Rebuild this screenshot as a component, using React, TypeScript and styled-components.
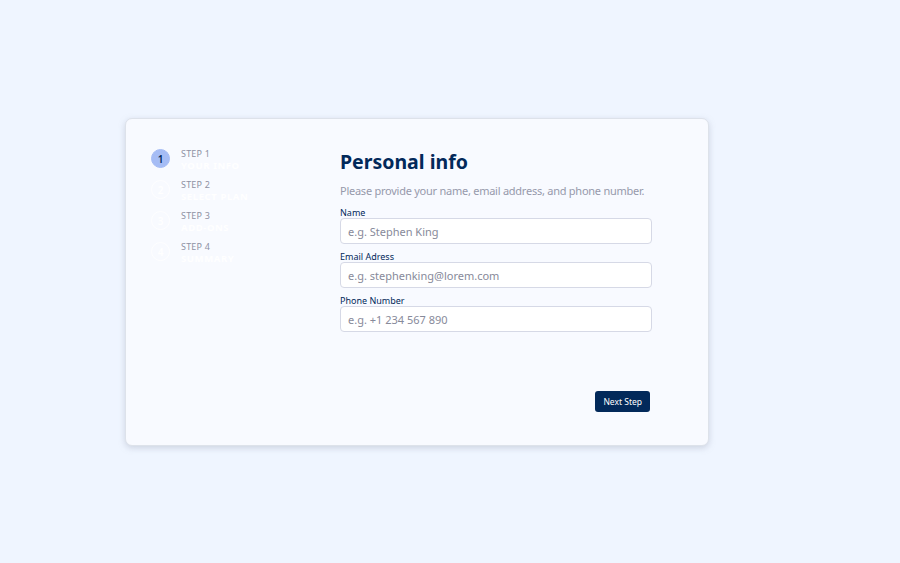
import React from 'react';
import styled, { createGlobalStyle } from 'styled-components';

const GlobalStyle = createGlobalStyle`
  * {
    box-sizing: border-box;
  }
  body {
    margin: 0;
    background: #eff5ff;
    font-family: 'Noto Sans', 'Open Sans', sans-serif;
  }
`;

const Page = styled.div`
  min-height: 563px;
  padding: 118px 0 0 125px;
`;

const Card = styled.div`
  width: 584px;
  height: 328px;
  display: flex;
  padding: 10px;
  background: #f8faff;
  border: 1px solid #dde2ea;
  border-radius: 7px;
  box-shadow: 0 2px 6px rgba(140, 150, 170, 0.35);
`;

const Sidebar = styled.aside`
  width: 180px;
  flex-shrink: 0;
  padding: 20px 15px;
  display: flex;
  flex-direction: column;
  gap: 12px;
`;

const StepItem = styled.div`
  display: flex;
  align-items: flex-start;
  gap: 11px;
  height: 19px;
`;

const StepCircle = styled.div<{ active: boolean }>`
  width: 19px;
  height: 19px;
  flex-shrink: 0;
  border-radius: 50%;
  display: flex;
  align-items: center;
  justify-content: center;
  font-size: 10px;
  font-weight: 600;
  color: ${props => props.active ? '#02295a' : '#ffffff'};
  background: ${props => props.active ? '#a5bcf5' : 'transparent'};
  border: 1px solid ${props => props.active ? '#a5bcf5' : 'rgba(255, 255, 255, 0.8)'};
`;

const StepText = styled.div`
  display: flex;
  flex-direction: column;
  gap: 1px;
`;

const StepLabel = styled.span`
  font-size: 9px;
  line-height: 10px;
  color: #8e91a3;
  letter-spacing: 0.2px;
`;

const StepTitle = styled.span`
  font-size: 9.5px;
  line-height: 11px;
  font-weight: 700;
  color: #ffffff;
  letter-spacing: 0.6px;
`;

const Main = styled.main`
  margin-left: 24px;
  width: 312px;
  padding: 20px 0 23px;
  display: flex;
  flex-direction: column;
`;

const Title = styled.h1`
  margin: 0;
  font-size: 19.5px;
  line-height: 26px;
  font-weight: 700;
  color: #02295a;
`;

const Subtitle = styled.p`
  margin: 8px 0 8px;
  font-size: 11px;
  line-height: 16px;
  letter-spacing: -0.25px;
  white-space: nowrap;
  color: #9699ab;
`;

const Field = styled.div`
  display: flex;
  flex-direction: column;
  margin-bottom: 7px;
`;

const Label = styled.label`
  font-size: 9px;
  line-height: 11px;
  color: #02295a;
`;

const Input = styled.input`
  height: 26px;
  width: 100%;
  border: 1px solid #d6d9e6;
  border-radius: 4px;
  background: #ffffff;
  padding: 0 7px;
  font-family: inherit;
  font-size: 11px;
  color: #02295a;
  outline: none;
  &::placeholder {
    color: #878a9a;
  }
`;

const Footer = styled.div`
  margin-top: auto;
  display: flex;
  justify-content: flex-end;
  padding-right: 2px;
`;

const NextButton = styled.button`
  height: 21px;
  padding: 0 8px;
  border: none;
  border-radius: 3px;
  background: #02295a;
  color: #ffffff;
  font-family: inherit;
  font-size: 8.5px;
  cursor: pointer;
`;

const steps = [
  { n: 1, title: 'YOUR INFO' },
  { n: 2, title: 'SELECT PLAN' },
  { n: 3, title: 'ADD-ONS' },
  { n: 4, title: 'SUMMARY' },
];

export default function App() {
  return (
    <Page>
      <GlobalStyle />
      <Card>
        <Sidebar>
          {steps.map(s => (
            <StepItem key={s.n}>
              <StepCircle active={s.n === 1}>{s.n}</StepCircle>
              <StepText>
                <StepLabel>STEP {s.n}</StepLabel>
                <StepTitle>{s.title}</StepTitle>
              </StepText>
            </StepItem>
          ))}
        </Sidebar>
        <Main>
          <Title>Personal info</Title>
          <Subtitle>Please provide your name, email address, and phone number.</Subtitle>
          <Field>
            <Label>Name</Label>
            <Input placeholder="e.g. Stephen King" />
          </Field>
          <Field>
            <Label>Email Adress</Label>
            <Input placeholder="e.g. stephenking@lorem.com" />
          </Field>
          <Field>
            <Label>Phone Number</Label>
            <Input placeholder="e.g. +1 234 567 890" />
          </Field>
          <Footer>
            <NextButton>Next Step</NextButton>
          </Footer>
        </Main>
      </Card>
    </Page>
  );
}
